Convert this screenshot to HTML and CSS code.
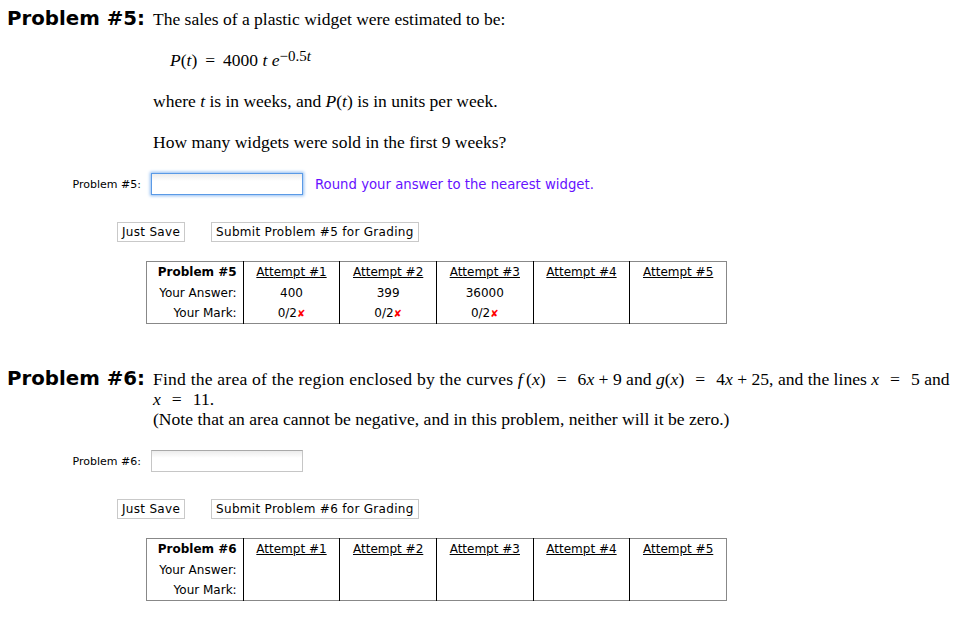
FILE: index.html
```html
<!DOCTYPE html>
<html>
    <head>
        <title>Problems</title>
        <link rel="stylesheet" href="styles.css">
    </head>
    <body>
        <div class="problem first">
            <div class="title">Problem #5:</div>
            <div class="text">
                <p>The sales of a plastic widget were estimated to be:</p>
                <p class="formula"><i>P</i>(<i>t</i>)<span class="eq">=</span>4000 <i>t</i> <i>e</i><sup>&minus;0.5<i>t</i></sup></p>
                <p>where <i>t</i> is in weeks, and <i>P</i>(<i>t</i>) is in units per week.</p>
                <p>How many widgets were sold in the first 9 weeks?</p>
            </div>
        </div>
        <div class="answer">
            <label class="label" for="ans5">Problem #5:</label>
            <input id="ans5" class="field focused" type="text">
            <span class="hint">Round your answer to the nearest widget.</span>
        </div>
        <div class="buttons">
            <button class="btn">Just Save</button>
            <button class="btn">Submit Problem #5 for Grading</button>
        </div>
        <table class="attempts">
            <tr>
                <th>Problem #5</th>
                <td><u>Attempt #1</u></td>
                <td><u>Attempt #2</u></td>
                <td><u>Attempt #3</u></td>
                <td><u>Attempt #4</u></td>
                <td><u>Attempt #5</u></td>
            </tr>
            <tr>
                <th class="lbl">Your Answer:</th>
                <td>400</td>
                <td>399</td>
                <td>36000</td>
                <td></td>
                <td></td>
            </tr>
            <tr>
                <th class="lbl">Your Mark:</th>
                <td>0/2<span class="wrong">&#10008;</span></td>
                <td>0/2<span class="wrong">&#10008;</span></td>
                <td>0/2<span class="wrong">&#10008;</span></td>
                <td></td>
                <td></td>
            </tr>
        </table>

        <div class="problem second">
            <div class="title">Problem #6:</div>
            <div class="text wide">
                <span class="spread">Find the area of the region enclosed by the curves</span> <i>f</i>&thinsp;(<i>x</i>)<span class="eq">=</span>6<i>x</i> + 9 and <i>g</i>(<i>x</i>)<span class="eq">=</span>4<i>x</i> + 25, and the lines <i>x</i><span class="eq">=</span>5 and <i>x</i><span class="eq">=</span>11.<br>
                (Note that an area cannot be negative, and in this problem, neither will it be zero.)
            </div>
        </div>
        <div class="answer">
            <label class="label" for="ans6">Problem #6:</label>
            <input id="ans6" class="field" type="text">
        </div>
        <div class="buttons">
            <button class="btn">Just Save</button>
            <button class="btn">Submit Problem #6 for Grading</button>
        </div>
        <table class="attempts">
            <tr>
                <th>Problem #6</th>
                <td><u>Attempt #1</u></td>
                <td><u>Attempt #2</u></td>
                <td><u>Attempt #3</u></td>
                <td><u>Attempt #4</u></td>
                <td><u>Attempt #5</u></td>
            </tr>
            <tr>
                <th class="lbl">Your Answer:</th>
                <td></td><td></td><td></td><td></td><td></td>
            </tr>
            <tr>
                <th class="lbl">Your Mark:</th>
                <td></td><td></td><td></td><td></td><td></td>
            </tr>
        </table>
    </body>
</html>
```

FILE: styles.css
```css
html, body {
    margin: 0;
    background: #fff;
    color: #000;
}

body {
    padding: 0 8px 0 7px;
    font-family: "Liberation Serif", serif;
    font-size: 17.5px;
}

.problem {
    display: flex;
    align-items: baseline;
}

.first {
    margin-top: 7px;
}

.second {
    margin-top: 43px;
}

.title {
    width: 146px;
    flex: none;
    font-family: "DejaVu Sans", sans-serif;
    font-weight: bold;
    font-size: 19.8px;
}

.text {
    line-height: 20px;
}

.wide {
    font-size: 17.6px;
}

.spread {
    letter-spacing: 0.2px;
}

.text p {
    margin: 0 0 21px 0;
}

.text p:last-child {
    margin-bottom: 0;
}

.formula {
    padding-left: 17px;
}

.formula sup {
    font-size: 15px;
    line-height: 0;
    vertical-align: 5px;
}

.eq {
    padding: 0 8px;
}

.wide .eq {
    padding: 0 11px;
}

.answer {
    display: flex;
    align-items: center;
    margin-top: 21px;
    height: 22px;
}

.label {
    width: 134px;
    text-align: right;
    margin-right: 10px;
    font-family: "DejaVu Sans", sans-serif;
    font-size: 11px;
}

.field {
    width: 152px;
    height: 22px;
    box-sizing: border-box;
    margin: 0;
    padding: 0 3px;
    border: 1px solid #c6c6c6;
    border-top-color: #a9a9a9;
    background: linear-gradient(#ececec, #fff 7px);
    outline: none;
}

.focused {
    border: 1px solid #5a9ae6;
    box-shadow: 0 0 3px 1px #8fbcf2;
}

.hint {
    margin-left: 12px;
    font-family: "DejaVu Sans", sans-serif;
    font-size: 13.25px;
    color: #6611ff;
}

.buttons {
    display: flex;
    gap: 26px;
    margin-top: 27px;
    padding-left: 110px;
}

.btn {
    height: 20px;
    padding: 0 4px;
    background: #fff;
    border: 1px solid #c9c9c9;
    border-radius: 0;
    font-family: "DejaVu Sans", sans-serif;
    font-size: 12px;
    letter-spacing: 0.3px;
    color: #000;
}

.attempts {
    width: 581px;
    table-layout: fixed;
    margin: 19px 0 0 139px;
    border: 1px solid #888;
    border-collapse: collapse;
    font-family: "DejaVu Sans", sans-serif;
    font-size: 12px;
}

.attempts th,
.attempts td {
    height: 20px;
    padding: 0;
    box-sizing: border-box;
    border-right: 1px solid #000;
    text-align: center;
}

.attempts td:last-child {
    border-right: none;
}

.attempts th {
    text-align: right;
    padding-right: 6px;
}

.attempts tr:first-child th,
.attempts tr:first-child td {
    height: 21px;
}

.attempts tr:last-child th,
.attempts tr:last-child td {
    height: 21px;
}

.attempts .lbl {
    font-weight: normal;
}

.wrong {
    color: #ff0000;
    font-size: 10px;
    font-weight: bold;
}
```
